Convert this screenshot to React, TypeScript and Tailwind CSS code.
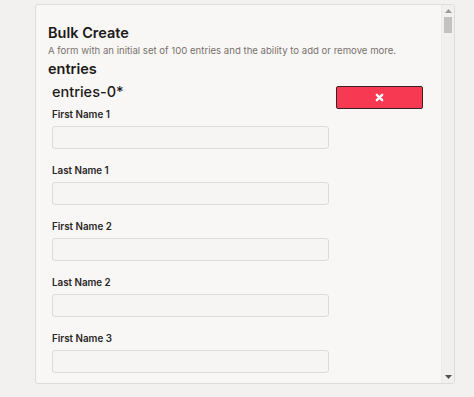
const fields = ['First Name 1', 'Last Name 1', 'First Name 2', 'Last Name 2', 'First Name 3']

export default function App() {
  return (
    <div
      className="h-[397px] w-[474px] bg-[#f2f1f0] pl-[35px] pt-[4px]"
      style={{ fontFamily: 'Inter, "Noto Sans", sans-serif' }}
    >
      <div className="flex h-[380px] w-[420px] overflow-hidden rounded-[3px] border border-[#dedcda] bg-[#f8f7f6]">
        <div className="flex-1 overflow-hidden pl-[12px] pr-[18px] pt-[19px]">
          <h1 className="text-[14.5px] font-semibold leading-[18px] text-[#1c1917]">Bulk Create</h1>
          <p className="mt-[2px] text-[9.6px] leading-[13px] text-[#78716c]">
            A form with an initial set of 100 entries and the ability to add or remove more.
          </p>
          <h2 className="mt-[3px] text-[14.5px] font-semibold leading-[18px] text-[#1c1917]">entries</h2>
          <div className="pl-[4px]">
            <div className="flex items-start justify-between">
              <h3 className="mt-[5px] text-[14.5px] font-medium leading-[18px] text-[#1c1917]">entries-0*</h3>
              <button className="mt-[8px] flex h-[23px] w-[87px] items-center justify-center rounded-[2px] border-[1.5px] border-[#3b2226] bg-[#f73a52]">
                <svg width="9" height="9" viewBox="0 0 10 10">
                  <path d="M2 2 L8 8 M8 2 L2 8" stroke="white" strokeWidth="2.6" strokeLinecap="round" />
                </svg>
              </button>
            </div>
            <div className="mt-[-1px] flex flex-col">
              {fields.map((f) => (
                <div key={f} className="flex h-[56px] shrink-0 flex-col">
                  <label className="text-[9.8px] font-semibold leading-[13px] text-[#292524]">{f}</label>
                  <input
                    type="text"
                    className="mt-[5px] h-[23px] w-[277px] rounded-[3px] border border-[#dddad7] bg-[#f6f5f4] outline-none"
                  />
                </div>
              ))}
            </div>
          </div>
        </div>
        {/* scrollbar */}
        <div className="flex w-[13px] shrink-0 flex-col items-center border-l border-[#eceae8] bg-[#f1f0ef]">
          <div className="flex h-[12px] items-center justify-center">
            <svg width="7" height="4" viewBox="0 0 7 4">
              <path d="M0 4 L3.5 0 L7 4 Z" fill="#9a9a9a" />
            </svg>
          </div>
          <div className="h-[16px] w-[8px] bg-[#c2c2c2]" />
          <div className="flex-1" />
          <div className="flex h-[12px] items-center justify-center">
            <svg width="7" height="4" viewBox="0 0 7 4">
              <path d="M0 0 L3.5 4 L7 0 Z" fill="#505050" />
            </svg>
          </div>
        </div>
      </div>
    </div>
  )
}
